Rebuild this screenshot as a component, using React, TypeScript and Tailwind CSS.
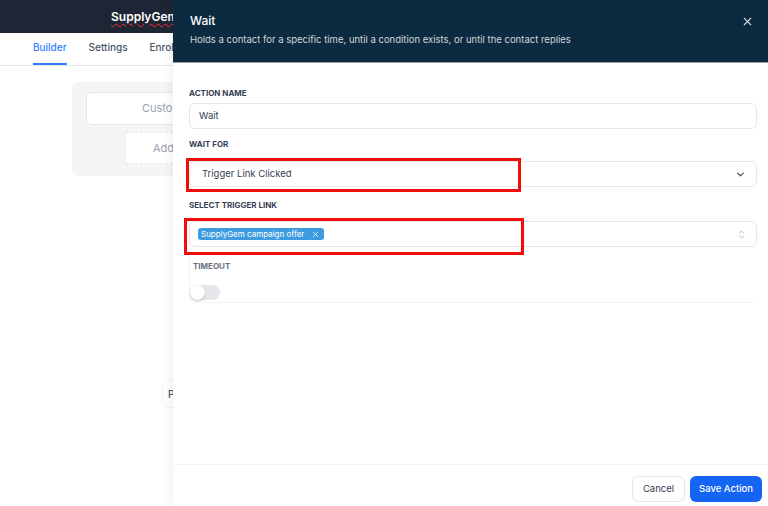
import { X, ChevronDown, ChevronsUpDown } from 'lucide-react'

export default function App() {
  return (
    <div className="relative w-[768px] h-[506px] overflow-hidden bg-white font-['Inter',sans-serif]">
      {/* Page behind the drawer */}
      <header className="h-[33px] bg-[#1e2535] flex items-center pl-[111px]">
        <span className="text-white text-[12px] font-semibold underline decoration-wavy decoration-red-500 decoration-1 underline-offset-2">SupplyGem</span>
      </header>
      <nav className="h-[33px] border-b border-gray-200 flex items-end pl-[33px] gap-[22px] text-[10px] font-medium text-gray-600">
        <div className="pb-[8px] border-b-2 border-blue-500 text-blue-500">Builder</div>
        <div className="pb-[10px]">Settings</div>
        <div className="pb-[10px]">Enrollment</div>
      </nav>
      <div className="ml-[72px] mt-[16px] w-[200px] h-[94px] bg-[#f4f5f7] rounded-md pt-[10px] pl-[14px]">
        <div className="h-[33px] bg-white border border-gray-200 rounded-md flex items-center pl-[55px] text-[11px] text-gray-400">Custom</div>
        <div className="ml-[39px] mt-[7px] h-[32px] bg-white border border-dashed border-gray-200 flex items-center pl-[27px] text-[11px] text-gray-400">Add</div>
      </div>
      <div className="ml-[162px] mt-[204px] w-[40px] h-[28px] bg-white border border-gray-100 rounded-md flex items-center pl-[5px] text-[10px] font-medium text-slate-600">P</div>

      {/* Drawer */}
      <aside className="absolute top-0 right-0 w-[595px] h-[506px] bg-white flex flex-col shadow-[-4px_0_8px_rgba(0,0,0,0.05)]">
        <div className="h-[63px] bg-[#0c2b40] border-b border-gray-400 flex items-start justify-between pl-[17px] pr-[14px] pt-[13px]">
          <div>
            <h2 className="text-white text-[12px] font-medium leading-[16px]">Wait</h2>
            <p className="text-gray-300 text-[9.5px] leading-[13px] mt-[4px]">Holds a contact for a specific time, until a condition exists, or until the contact replies</p>
          </div>
          <X className="w-[13px] h-[13px] text-gray-300 mt-[2px]" strokeWidth={2} />
        </div>

        <div className="flex-1 pl-[16px] pr-[11px] pt-[24px]">
          <label className="block text-[8px] font-bold text-gray-700 leading-[12px]">ACTION NAME</label>
          <div className="mt-[4px] h-[26px] border border-gray-200 rounded-md flex items-center px-[9px] text-[9.5px] text-gray-700">Wait</div>

          <label className="block mt-[9px] text-[8px] font-bold text-gray-700 leading-[12px]">WAIT FOR</label>
          <div className="relative mt-[11px] h-[26px] border border-gray-200 rounded-md flex items-center justify-between pl-[12px] pr-[10px] text-[9.5px] text-gray-700">
            <span>Trigger Link Clicked</span>
            <ChevronDown className="w-[11px] h-[11px] text-slate-600" strokeWidth={3} />
            <div className="absolute left-[-4px] top-[-4px] w-[335px] h-[34px] border-[3px] border-[#f20d0d] pointer-events-none" />
          </div>

          <label className="block mt-[12px] text-[8px] font-bold text-gray-700 leading-[12px]">SELECT TRIGGER LINK</label>
          <div className="relative mt-[10px] h-[26px] border border-gray-200 rounded-md flex items-center justify-between pl-[8px] pr-[9px]">
            <span className="inline-flex items-center gap-[7px] h-[12px] bg-[#3d9be0] rounded-[3px] pl-[3px] pr-[4px] text-white text-[8px] leading-[12px]">
              SupplyGem campaign offer
              <X className="w-[9px] h-[9px]" strokeWidth={2} />
            </span>
            <ChevronsUpDown className="w-[11px] h-[11px] text-gray-400" strokeWidth={1.5} />
            <div className="absolute left-[-6px] top-[-4px] w-[340px] h-[37px] border-[3px] border-[#f20d0d] pointer-events-none" />
          </div>

          <div className="mt-[7px] border-b border-l border-gray-100 rounded-b-md pt-[6px] pb-[2px]">
            <label className="block pl-[3px] text-[8px] font-bold text-gray-500 leading-[12px]">TIMEOUT</label>
            <div className="mt-[13px] w-[30px] h-[15px] rounded-full bg-gray-200 flex items-center">
              <div className="w-[15px] h-[15px] rounded-full bg-white shadow-[0_1px_2px_rgba(0,0,0,0.25)]" />
            </div>
          </div>
        </div>

        <div className="h-[42px] border-t border-gray-100 flex items-start justify-end gap-[5px] pr-[6px] pt-[11px]">
          <button className="h-[26px] w-[53px] border border-gray-200 rounded-md bg-white text-[9.5px] text-gray-700">Cancel</button>
          <button className="h-[26px] w-[72px] rounded-md bg-[#1565f5] text-[9.5px] font-medium text-white">Save Action</button>
        </div>
      </aside>
    </div>
  )
}
